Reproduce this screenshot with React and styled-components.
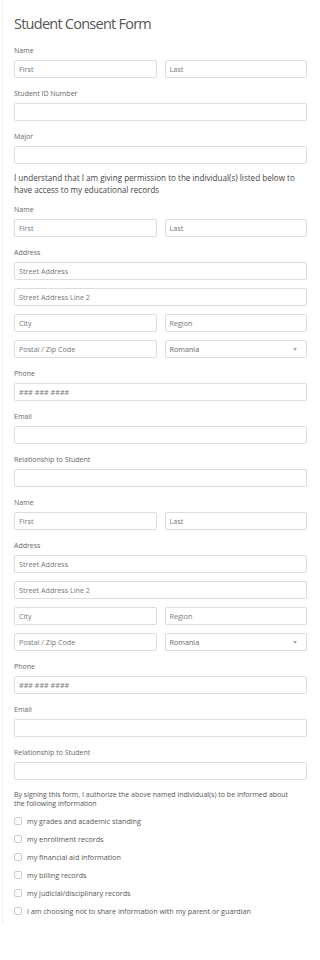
import styled, { createGlobalStyle } from 'styled-components';

const GlobalStyle = createGlobalStyle`
  body {
    margin: 0;
    background: #fff;
    font-family: 'Open Sans', 'Noto Sans', sans-serif;
  }
  * {
    box-sizing: border-box;
  }
`;

const Card = styled.form`
  margin-left: 2px;
  border-left: 1px solid #f0f0f0;
  padding: 14px 13px 5px 11px;
`;

const Title = styled.h1`
  margin: 0 0 12px;
  font-size: 14.5px;
  line-height: 20px;
  letter-spacing: -0.75px;
  font-weight: 400;
  color: #555;
`;

const Field = styled.div`
  margin-bottom: 11px;
`;

const Label = styled.div`
  font-size: 7px;
  line-height: 10px;
  color: #666;
  margin-bottom: 4px;
`;

const Input = styled.input`
  display: block;
  width: 100%;
  height: 18px;
  margin: 0;
  padding: 0 4px;
  border: 1px solid #ddd;
  border-radius: 2px;
  background: #fff;
  font-family: inherit;
  font-size: 7.2px;
  color: #555;
  outline: none;

  &::placeholder {
    color: #777;
  }
`;

const Pair = styled.div`
  display: grid;
  grid-template-columns: 1fr 1fr;
  gap: 8px;
`;

const Stack = styled.div`
  display: flex;
  flex-direction: column;
  gap: 8px;
`;

const Select = styled.div`
  display: flex;
  align-items: center;
  justify-content: space-between;
  height: 18px;
  padding: 0 9px 0 4px;
  border: 1px solid #ddd;
  border-radius: 2px;
  font-size: 7.2px;
  color: #666;
`;

const Caret = styled.span`
  width: 0;
  height: 0;
  border-left: 2.5px solid transparent;
  border-right: 2.5px solid transparent;
  border-top: 3px solid #aaa;
`;

const Intro = styled.p`
  margin: -3px 0 9px;
  font-size: 8.1px;
  line-height: 12px;
  color: #444;
`;

const Notice = styled.p`
  margin: 0 0 4px;
  max-width: 282px;
  font-size: 7px;
  line-height: 8.5px;
  color: #555;
`;

const Options = styled.div`
  display: flex;
  flex-direction: column;
`;

const Option = styled.label`
  display: flex;
  align-items: center;
  gap: 5px;
  height: 18px;
  font-size: 7.2px;
  color: #555;
`;

const Box = styled.span`
  width: 8px;
  height: 8px;
  border: 1px solid #ccc;
  border-radius: 2px;
  flex-shrink: 0;
`;

const options = [
  'my grades and academic standing',
  'my enrollment records',
  'my financial aid information',
  'my billing records',
  'my judicial/disciplinary records',
  'I am choosing not to share information with my parent or guardian',
];

const Contact = () => (
  <>
    <Field>
      <Label>Name</Label>
      <Pair>
        <Input placeholder="First" />
        <Input placeholder="Last" />
      </Pair>
    </Field>
    <Field>
      <Label>Address</Label>
      <Stack>
        <Input placeholder="Street Address" />
        <Input placeholder="Street Address Line 2" />
        <Pair>
          <Input placeholder="City" />
          <Input placeholder="Region" />
        </Pair>
        <Pair>
          <Input placeholder="Postal / Zip Code" />
          <Select>
            Romania
            <Caret />
          </Select>
        </Pair>
      </Stack>
    </Field>
    <Field>
      <Label>Phone</Label>
      <Input placeholder="### ### ####" />
    </Field>
    <Field>
      <Label>Email</Label>
      <Input />
    </Field>
    <Field>
      <Label>Relationship to Student</Label>
      <Input />
    </Field>
  </>
);

export default function App() {
  return (
    <>
      <GlobalStyle />
      <Card onSubmit={(e) => e.preventDefault()}>
        <Title>Student Consent Form</Title>
        <Field>
          <Label>Name</Label>
          <Pair>
            <Input placeholder="First" />
            <Input placeholder="Last" />
          </Pair>
        </Field>
        <Field>
          <Label>Student ID Number</Label>
          <Input />
        </Field>
        <Field>
          <Label>Major</Label>
          <Input />
        </Field>
        <Intro>
          I understand that I am giving permission to the individual(s) listed below to have access
          to my educational records
        </Intro>
        <Contact />
        <Contact />
        <Notice>
          By signing this form, I authorize the above named individual(s) to be informed about the
          following information
        </Notice>
        <Options>
          {options.map((text) => (
            <Option key={text}>
              <Box />
              {text}
            </Option>
          ))}
        </Options>
      </Card>
    </>
  );
}
